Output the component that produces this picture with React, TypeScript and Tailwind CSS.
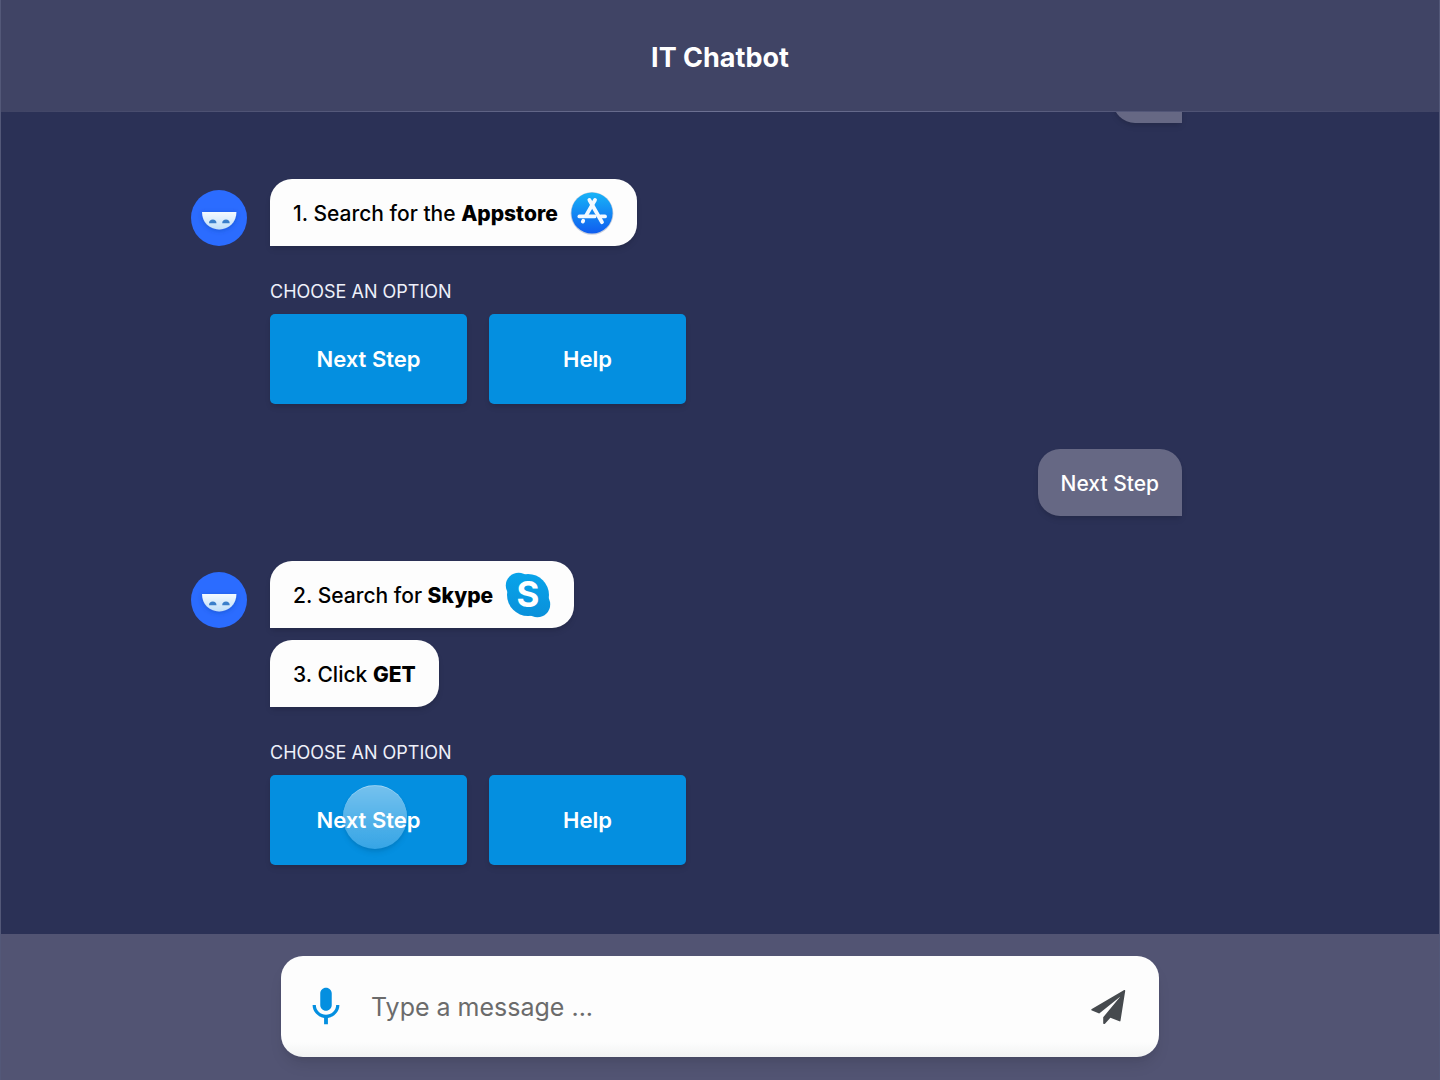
// App.tsx
import React from 'react';
import { MdMic } from 'react-icons/md';

const BotAvatar: React.FC = () => {
    return (
        <svg viewBox="0 0 56 56" className="h-14 w-14 shrink-0" aria-hidden="true">
            <defs>
                <linearGradient id="mask-fill" x1="0" y1="0" x2="0" y2="1">
                    <stop offset="0" stopColor="#f3faff" />
                    <stop offset="1" stopColor="#bfdff9" />
                </linearGradient>
                <filter id="mask-shadow" x="-30%" y="-50%" width="160%" height="200%">
                    <feDropShadow dx="0" dy="1" stdDeviation="2.5" floodColor="#0b3fae" floodOpacity="0.5" />
                </filter>
            </defs>
            <circle cx="28" cy="28" r="28" fill="#2b6cff" />
            <path d="M11 22H45.4C45.4 32 38 39.4 28.2 39.4S11 32 11 22Z" fill="url(#mask-fill)" filter="url(#mask-shadow)" />
            <path d="M18 33.2C18 31 19.6 29.6 21.8 29.6S25.5 31 25.5 33.2ZM31.2 33.2C31.2 31 32.8 29.6 35 29.6S38.7 31 38.7 33.2Z" fill="#3a7fca" />
        </svg>
    );
};

const AppStoreIcon: React.FC = () => {
    return (
        <svg viewBox="0 0 44 44" className="-my-2 h-11 w-11 shrink-0" aria-hidden="true">
            <defs>
                <linearGradient id="store-fill" x1="0" y1="0" x2="0" y2="1">
                    <stop offset="0" stopColor="#18b4f7" />
                    <stop offset="1" stopColor="#0f5df0" />
                </linearGradient>
            </defs>
            <circle cx="22" cy="22.4" r="21.4" fill="#c9cfdd" />
            <circle cx="22" cy="22" r="20.6" fill="url(#store-fill)" />
            <g stroke="#f4f9ff" strokeWidth="3.8" strokeLinecap="round" fill="none">
                <path d="M25 9L16.2 24.4" />
                <path d="M13.2 29.8L12.8 30.6" />
                <path d="M9.4 25.4H24.6" />
                <path d="M30.6 25.4H35" />
                <path d="M19.4 9L32 31.2" />
            </g>
        </svg>
    );
};

const SkypeIcon: React.FC = () => {
    return (
        <svg viewBox="0 0 46 46" className="-my-2 h-[46px] w-[46px] shrink-0" aria-label="Skype">
            <defs>
                <linearGradient id="skype-fill" x1="0" y1="0" x2="0" y2="46" gradientUnits="userSpaceOnUse">
                    <stop offset="0" stopColor="#08a4ea" />
                    <stop offset="1" stopColor="#0a90da" />
                </linearGradient>
            </defs>
            <g fill="url(#skype-fill)">
                <circle cx="23" cy="23" r="21" />
                <circle cx="13.6" cy="13.6" r="12.8" />
                <circle cx="32.4" cy="32.4" r="12.8" />
            </g>
            <text x="23" y="35" textAnchor="middle" fill="#fff" fontSize="35" fontWeight="700" fontFamily="Inter, sans-serif">
                S
            </text>
        </svg>
    );
};

const PaperPlane: React.FC = () => {
    return (
        <svg viewBox="0 0 36 36" className="h-9 w-9" fill="#464a4e" aria-hidden="true">
            <path d="M34.2 1.1C34.9.8 35.3 1.2 35.2 1.9L30.5 31.7C30.4 32.4 30 32.6 29.4 32.3L20.4 28.8L15.2 34.6C14.3 35.5 13.2 35.2 13.2 34V28.2L30.4 7.4L9.2 24.4L1.9 21.6C1.1 21.3 1.1 20.4 1.8 20Z" />
        </svg>
    );
};

const BotBubble: React.FC<{ children: React.ReactNode }> = ({ children }) => {
    return (
        <div className="flex h-[67px] w-fit items-center gap-3 rounded-[22px] rounded-bl-none bg-[#fdfdfd] px-[23px] text-[21px] font-medium text-black shadow-md">
            {children}
        </div>
    );
};

const UserBubble: React.FC<{ children?: React.ReactNode }> = ({ children }) => {
    return (
        <div className="flex h-[67px] min-w-[69px] shrink-0 items-center self-end rounded-[22px] rounded-br-none bg-[#666884] px-[23px] pt-0.5 text-[21px] font-medium text-white shadow-md">
            {children}
        </div>
    );
};

const Options: React.FC<{ pressed?: boolean }> = ({ pressed }) => {
    return (
        <div className="mt-[34px]">
            <p className="mb-[10px] text-[18px] leading-6 text-[#eef0fa]">CHOOSE AN OPTION</p>
            <div className="flex gap-[22px] text-[22px] font-semibold text-white">
                <button type="button" className="relative h-[90px] w-[197px] rounded-[5px] bg-[#048fe0] shadow-md">
                    {/* Touch indicator */}
                    {pressed && (
                        <span className="absolute top-[10px] left-[73px] h-16 w-16 rounded-full border-t border-white/40 bg-linear-to-b from-white/45 to-white/20 shadow-md" />
                    )}
                    <span className="relative">Next Step</span>
                </button>
                <button type="button" className="h-[90px] w-[197px] rounded-[5px] bg-[#048fe0] shadow-md">
                    Help
                </button>
            </div>
        </div>
    );
};

export default function App() {
    return (
        <div className="flex h-screen flex-col border-x border-[#535878] bg-[#2b3156] font-['Inter',sans-serif]">
            {/* Header section */}
            <header className="relative flex h-28 shrink-0 items-center justify-center bg-[#404465] pt-1">
                <h1 className="text-[27px] font-bold text-white">IT Chatbot</h1>
                <div className="absolute inset-x-0 bottom-0 h-px bg-linear-to-r from-transparent via-[#6d7193] to-transparent" />
            </header>

            {/* Conversation section, newest messages stay at the bottom */}
            <main className="flex min-h-0 flex-1 flex-col justify-end overflow-hidden">
                <div className="mx-auto flex w-full max-w-[1058px] flex-col pr-[67px] pb-[69px]">
                    <UserBubble />
                    <div className="mt-14 flex items-end gap-[23px]">
                        <BotAvatar />
                        <BotBubble>
                            <p className="pt-0.5">
                                1. Search for the <b className="font-extrabold">Appstore</b>
                            </p>
                            <AppStoreIcon />
                        </BotBubble>
                    </div>
                    <div className="pl-[79px]">
                        <Options />
                    </div>
                    <div className="mt-[45px] mb-[45px] flex flex-col">
                        <UserBubble>Next Step</UserBubble>
                    </div>
                    <div className="flex items-end gap-[23px]">
                        <BotAvatar />
                        <BotBubble>
                            <p className="pt-0.5">
                                2. Search for <b className="font-extrabold">Skype</b>
                            </p>
                            <SkypeIcon />
                        </BotBubble>
                    </div>
                    <div className="mt-3 pl-[79px]">
                        <BotBubble>
                            <p className="pt-0.5">
                                3. Click <b className="font-extrabold">GET</b>
                            </p>
                        </BotBubble>
                        <Options pressed />
                    </div>
                </div>
            </main>

            {/* Message box section */}
            <footer className="shrink-0 bg-[#525473] pt-[22px] pb-[23px]">
                <form className="mx-auto flex h-[101px] w-full max-w-[878px] items-center rounded-[22px] bg-linear-to-b from-[#fdfdfd] from-85% to-[#f2f3f3] pr-[33px] pl-[22px] shadow-lg">
                    <button type="button" aria-label="Record" className="text-[#048fe0]">
                        <MdMic className="h-[46px] w-[46px]" />
                    </button>
                    <input
                        type="text"
                        aria-label="Message"
                        placeholder="Type a message ..."
                        className="ml-[22px] min-w-0 flex-1 pt-0.5 text-[25px] text-[#6b6b6b] outline-none placeholder:text-[#6b6b6b]"
                    />
                    <button type="submit" aria-label="Send">
                        <PaperPlane />
                    </button>
                </form>
            </footer>
        </div>
    );
}
